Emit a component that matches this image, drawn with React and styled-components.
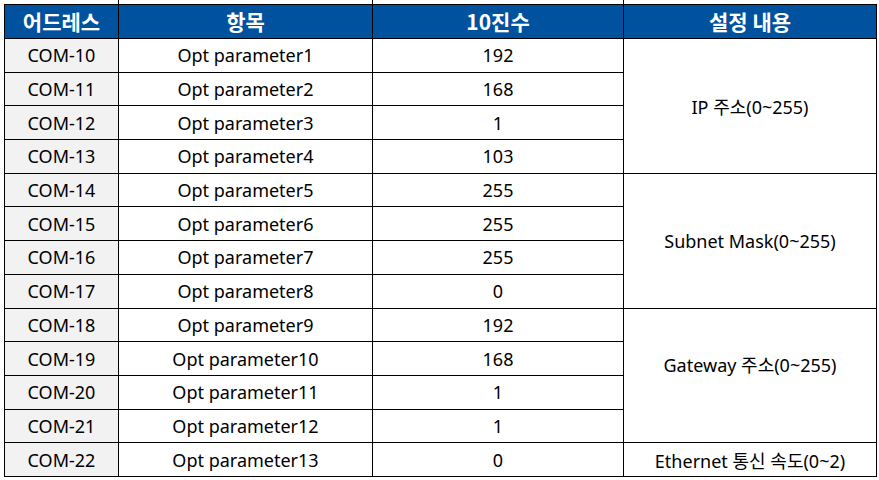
import React from 'react';
import styled, { createGlobalStyle } from 'styled-components';

const GlobalStyle = createGlobalStyle`
  html, body {
    margin: 0;
    padding: 0;
    background: #fff;
  }
  body {
    font-family: "Noto Sans", "Noto Sans CJK KR", sans-serif;
    color: #000;
  }
`;

const COLS = '113px 253px 250px 252px';

const Page = styled.div`
  padding-left: 4px;
  width: 879px;
  height: 480px;
  box-sizing: border-box;
`;

// column rulings that continue above the table (cropped sheet)
const TopStrip = styled.div`
  display: grid;
  grid-template-columns: ${COLS};
  column-gap: 1px;
  margin-left: 1px;
  width: max-content;
  height: 4px;
  background: #000;
`;

const Blank = styled.div`
  background: #fff;
`;

const Sheet = styled.div`
  display: grid;
  grid-template-columns: ${COLS};
  grid-template-rows: 33px repeat(13, 1fr);
  gap: 1px;
  padding: 1px;
  width: max-content;
  height: 473px;
  box-sizing: border-box;
  background: #000;
`;

const Head = styled.div`
  background: #01529e;
  color: #fff;
  font-family: "Noto Sans CJK KR", "Noto Sans", sans-serif;
  font-weight: 700;
  font-size: 21px;
  display: flex;
  align-items: center;
  justify-content: center;
  padding-bottom: 1px;
`;

const Cell = styled.div`
  background: ${(p) => (p.$shade ? '#f2f2f2' : '#fff')};
  font-size: 18px;
  display: flex;
  align-items: center;
  justify-content: center;
  white-space: nowrap;
  grid-row: ${(p) => (p.$span ? `span ${p.$span}` : 'auto')};
  padding-bottom: ${(p) => p.$lift || 0}px;
`;

const rows = [
  ['COM-10', 'Opt parameter1', '192'],
  ['COM-11', 'Opt parameter2', '168'],
  ['COM-12', 'Opt parameter3', '1'],
  ['COM-13', 'Opt parameter4', '103'],
  ['COM-14', 'Opt parameter5', '255'],
  ['COM-15', 'Opt parameter6', '255'],
  ['COM-16', 'Opt parameter7', '255'],
  ['COM-17', 'Opt parameter8', '0'],
  ['COM-18', 'Opt parameter9', '192'],
  ['COM-19', 'Opt parameter10', '168'],
  ['COM-20', 'Opt parameter11', '1'],
  ['COM-21', 'Opt parameter12', '1'],
  ['COM-22', 'Opt parameter13', '0'],
];

// merged cells in the last column, keyed by starting row
const groups = {
  0: { span: 4, label: 'IP 주소(0~255)', lift: 0 },
  4: { span: 4, label: 'Subnet Mask(0~255)', lift: 0 },
  8: { span: 4, label: 'Gateway 주소(0~255)', lift: 23 },
  12: { span: 1, label: 'Ethernet 통신 속도(0~2)', lift: 0 },
};

export default function App() {
  return (
    <Page>
      <GlobalStyle />
      <TopStrip>
        <Blank />
        <Blank />
        <Blank />
        <Blank />
      </TopStrip>
      <Sheet>
        <Head>어드레스</Head>
        <Head>항목</Head>
        <Head>10진수</Head>
        <Head>설정 내용</Head>
        {rows.map(([addr, item, dec], i) => (
          <React.Fragment key={addr}>
            <Cell $shade>{addr}</Cell>
            <Cell>{item}</Cell>
            <Cell>{dec}</Cell>
            {groups[i] && (
              <Cell $span={groups[i].span} $lift={groups[i].lift}>
                {groups[i].label}
              </Cell>
            )}
          </React.Fragment>
        ))}
      </Sheet>
    </Page>
  );
}
